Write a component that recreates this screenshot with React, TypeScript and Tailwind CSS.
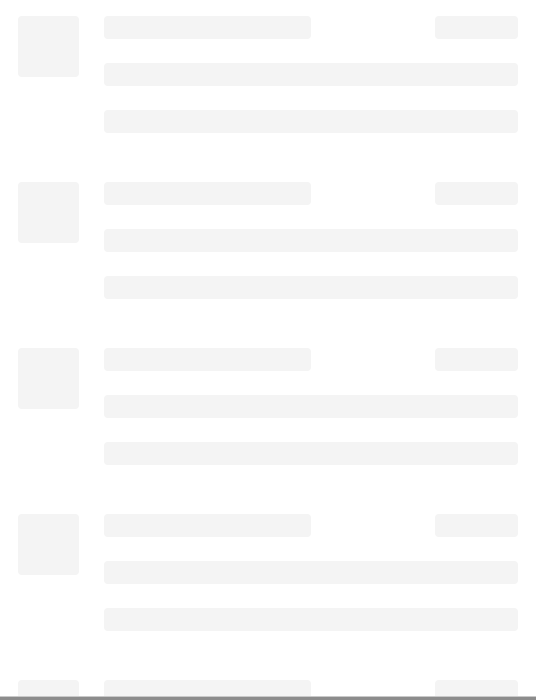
import React from 'react'

// Skeleton list: avatar block + three placeholder lines per row
function SkeletonRow() {
  return (
    <div className="flex gap-[25px] pb-[49px]">
      <div className="h-[61px] w-[61px] shrink-0 rounded bg-[#f4f4f4]" />
      <div className="flex grow flex-col gap-6">
        <div className="flex justify-between">
          <div className="h-[23px] w-[207px] rounded bg-[#f4f4f4]" />
          <div className="h-[23px] w-[83px] rounded bg-[#f4f4f4]" />
        </div>
        <div className="h-[23px] w-full rounded bg-[#f4f4f4]" />
        <div className="h-[23px] w-full rounded bg-[#f4f4f4]" />
      </div>
    </div>
  )
}

export default function App() {
  return (
    <div className="flex h-[700px] w-full flex-col overflow-hidden bg-white">
      <div className="min-h-0 grow overflow-hidden px-[18px] pt-4">
        {[0, 1, 2, 3, 4].map((i) => (
          <SkeletonRow key={i} />
        ))}
      </div>
      <div className="h-[4px] shrink-0 border-t border-[#c9c9c9] bg-[#8c8c8c]" />
    </div>
  )
}
